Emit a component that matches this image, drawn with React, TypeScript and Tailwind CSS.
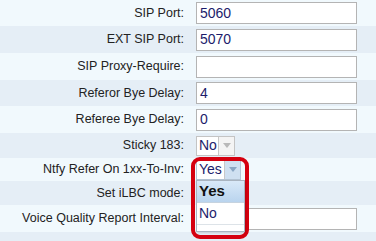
import React from "react"

const rows = [
  { label: "SIP Port:", value: "5060", kind: "input", h: "h-[26px]" },
  { label: "EXT SIP Port:", value: "5070", kind: "input", h: "h-[27px]" },
  { label: "SIP Proxy-Require:", value: "", kind: "input", h: "h-[27px]" },
  { label: "Referor Bye Delay:", value: "4", kind: "input", h: "h-[26px]" },
  { label: "Referee Bye Delay:", value: "0", kind: "input", h: "h-[27px]" },
  { label: "Sticky 183:", value: "No", kind: "select", h: "h-[25px]" },
  { label: "Ntfy Refer On 1xx-To-Inv:", value: "Yes", kind: "open", h: "h-[23px]" },
  { label: "Set iLBC mode:", value: "", kind: "none", h: "h-[24px]" },
  { label: "Voice Quality Report Interval:", value: "", kind: "input", h: "h-[27px]" },
  { label: "", value: "", kind: "none", h: "h-[9px]" },
]

function Arrow({ active }: { active?: boolean }) {
  return (
    <div
      className={`flex w-[16px] items-center justify-center border-l border-[#c8c8c8] ${
        active ? "bg-[#cfe0f1]" : "bg-[#f4f4f4]"
      }`}
    >
      <svg width="8" height="5" viewBox="0 0 8 5">
        <path d="M0 0 L8 0 L4 5 Z" fill={active ? "#8aa6c4" : "#b9b9b9"} />
      </svg>
    </div>
  )
}

export default function App() {
  return (
    <div className="relative w-[376px] h-[241px] overflow-hidden bg-white font-['Liberation_Sans',Arial,sans-serif]">
      {rows.map((r, i) => (
        <div
          key={i}
          className={`flex items-center ${r.h} ${i % 2 === 0 ? "bg-[#f1f9fd]" : "bg-[#e5eef6]"}`}
        >
          <div className="w-[184px] shrink-0 text-right text-[12.5px] text-[#222]">{r.label}</div>
          <div className="ml-[12px] flex items-center">
            {r.kind === "input" && (
              <div className="flex h-[22px] w-[161px] items-center border border-[#b4b4b4] bg-white pl-[3px] text-[14px] text-[#1c1c6b]">
                {r.value}
              </div>
            )}
            {r.kind === "select" && (
              <div className="flex h-[20px] border border-[#c4c4c4] bg-white">
                <div className="flex w-[21px] items-center pl-[2px] text-[14px] text-[#1c1c6b]">{r.value}</div>
                <Arrow />
              </div>
            )}
            {r.kind === "open" && (
              <div className="relative">
                <div className="flex h-[20px] border border-[#b4c4d4] bg-white">
                  <div className="flex w-[27px] items-center pl-[2px] text-[14px] text-[#1c1c6b]">{r.value}</div>
                  <Arrow active />
                </div>
                <div className="absolute left-0 top-[20px] z-10 w-[49px] border border-[#a9b4c0] bg-white shadow-[1px_1px_2px_rgba(0,0,0,0.15)]">
                  <div className="flex h-[21px] items-center bg-gradient-to-b from-[#d9e9f8] to-[#b9d4ee] pl-[2px] text-[15px] font-bold text-[#111]">
                    Yes
                  </div>
                  <div className="flex h-[22px] items-center border-t border-[#c6d3df] pl-[2px] text-[14px] text-[#1c1c6b]">
                    No
                  </div>
                  <div className="h-[7px] border-t border-[#dde3e8]" />
                </div>
              </div>
            )}
          </div>
        </div>
      ))}
      <div className="pointer-events-none absolute left-[191px] top-[157px] h-[82px] w-[58px] rounded-[9px] border-4 border-[#d5000f]" />
    </div>
  )
}
